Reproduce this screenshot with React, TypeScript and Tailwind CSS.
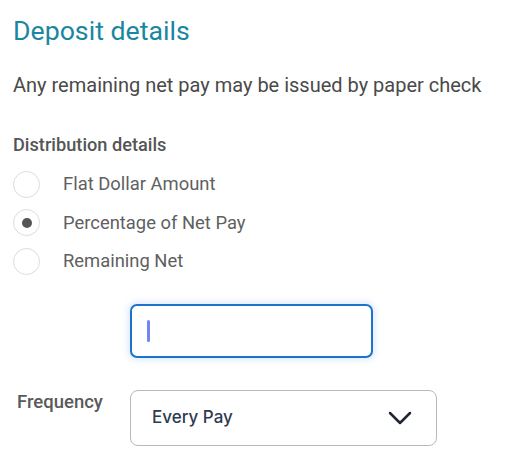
import React from "react";

function Radio({ checked, label }: { checked?: boolean; label: string }) {
  return (
    <div className="flex h-[38.5px] items-center">
      <div className="flex h-[27px] w-[27px] items-center justify-center rounded-full border-[1.5px] border-[#dcdcdc] bg-white">
        {checked && <div className="h-[10px] w-[10px] rounded-full bg-[#555555]" />}
      </div>
      <span className="ml-[23px] text-[18.4px] leading-[24px] text-[#5f5f5f]">{label}</span>
    </div>
  );
}

export default function App() {
  return (
    <div
      className="min-h-[473px] w-[525px] bg-white pl-[13px] pt-[15px]"
      style={{ fontFamily: "Roboto, 'Liberation Sans', sans-serif" }}
    >
      <h1 className="text-[26.7px] leading-[32px] text-[#1a86a2]">Deposit details</h1>
      <p className="mt-[24px] text-[20px] leading-[28px] text-[#4a4a4a]">
        Any remaining net pay may be issued by paper check
      </p>
      <h2 className="mt-[34px] text-[18.2px] font-medium leading-[24px] text-[#555555]">
        Distribution details
      </h2>
      <div className="mt-[8px] flex flex-col">
        <Radio label="Flat Dollar Amount" />
        <Radio checked label="Percentage of Net Pay" />
        <Radio label="Remaining Net" />
      </div>
      <div className="ml-[117px] mt-[23px] flex h-[54px] w-[243px] items-center rounded-[7px] border-2 border-[#1b74c9] bg-white pl-[15px] shadow-[0_0_6px_2px_rgba(59,130,246,0.18)]">
        <div className="h-[22px] w-[3px] rounded-full bg-[#7086f3]" />
      </div>
      <div className="mt-[32px] flex items-start">
        <span className="ml-[4px] w-[113px] text-[18.5px] font-medium leading-[24px] text-[#5a5a5a]">
          Frequency
        </span>
        <div className="flex h-[56px] w-[307px] items-center justify-between rounded-[8px] border-[1.5px] border-[#b9b9b9] bg-white pl-[21px] pr-[24px]">
          <span
            className="text-[17px] font-medium text-[#2d3a52]"
            style={{ fontFamily: "Inter, Roboto, sans-serif" }}
          >
            Every Pay
          </span>
          <svg width="24" height="16" viewBox="0 0 24 16" fill="none">
            <path d="M2 3 L12 13 L22 3" stroke="#1f2633" strokeWidth="2.5" strokeLinecap="round" strokeLinejoin="round" />
          </svg>
        </div>
      </div>
    </div>
  );
}
